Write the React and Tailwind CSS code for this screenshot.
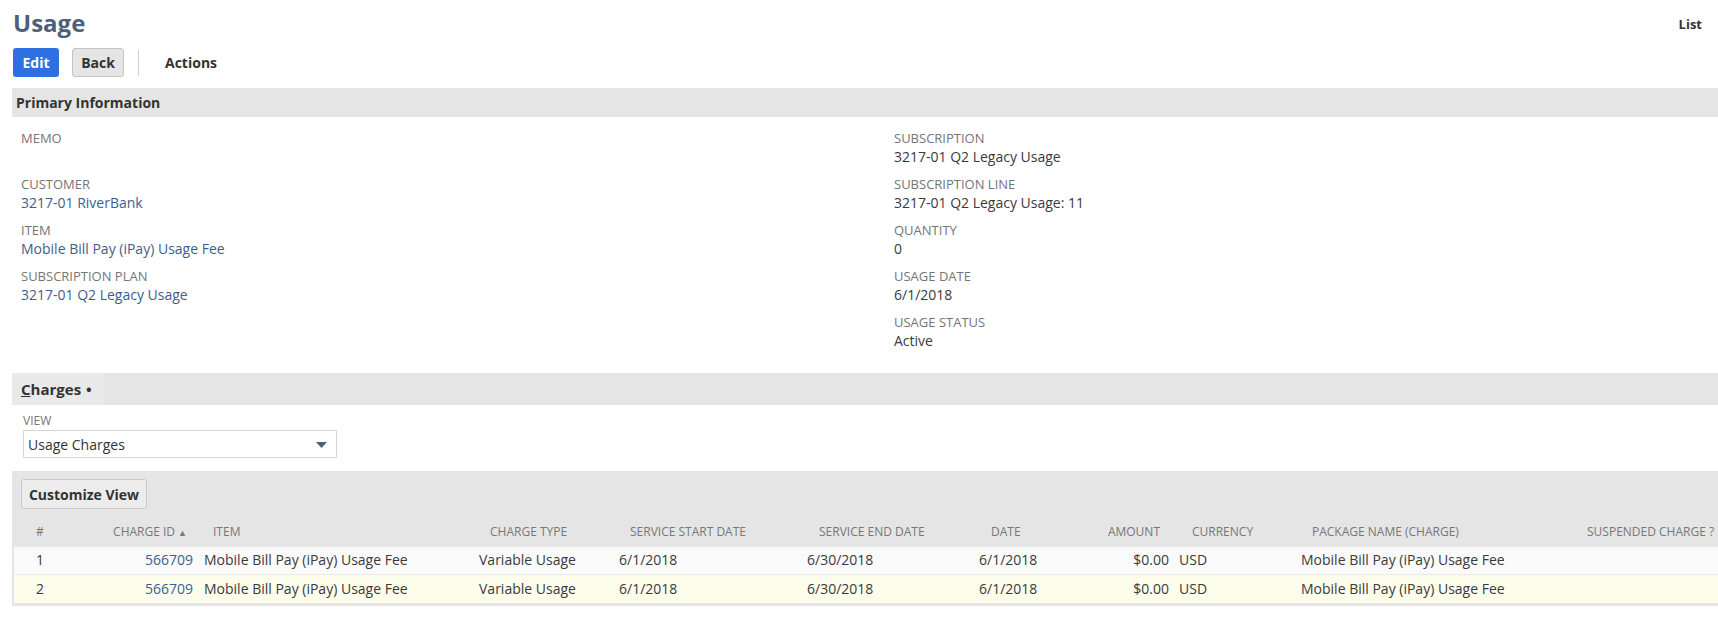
import React from 'react';

const leftFields = [
  { label: 'Memo', value: '' },
  { label: 'Customer', value: '3217-01 RiverBank', link: true },
  { label: 'Item', value: 'Mobile Bill Pay (iPay) Usage Fee', link: true },
  { label: 'Subscription Plan', value: '3217-01 Q2 Legacy Usage', link: true },
];

const rightFields = [
  { label: 'Subscription', value: '3217-01 Q2 Legacy Usage' },
  { label: 'Subscription Line', value: '3217-01 Q2 Legacy Usage: 11' },
  { label: 'Quantity', value: '0' },
  { label: 'Usage Date', value: '6/1/2018' },
  { label: 'Usage Status', value: 'Active' },
];

// widths + paddings line the header text up the way the list view does
const columns = [
  { title: '#', w: 'w-[56px]', th: 'pl-[22px] text-left', td: 'pl-[22px] text-left' },
  { title: 'Charge ID', sort: true, w: 'w-[128px]', th: 'pr-[11px] text-right', td: 'pr-[5px] text-right' },
  { title: 'Item', w: 'w-[276px]', th: 'pl-[15px] text-left', td: 'pl-[6px] text-left' },
  { title: 'Charge Type', w: 'w-[140px]', th: 'pl-[16px] text-left', td: 'pl-[5px] text-left' },
  { title: 'Service Start Date', w: 'w-[188px]', th: 'pl-[16px] text-left', td: 'pl-[5px] text-left' },
  { title: 'Service End Date', w: 'w-[171px]', th: 'pl-[17px] text-left', td: 'pl-[5px] text-left' },
  { title: 'Date', w: 'w-[127px]', th: 'pl-[18px] text-left', td: 'pl-[6px] text-left' },
  { title: 'Amount', w: 'w-[74px]', th: 'pr-[14px] text-right', td: 'pr-[5px] text-right' },
  { title: 'Currency', w: 'w-[122px]', th: 'pl-[18px] text-left', td: 'pl-[5px] text-left' },
  { title: 'Package Name (Charge)', w: 'w-[279px]', th: 'pl-[16px] text-left', td: 'pl-[5px] text-left' },
  { title: 'Suspended Charge ?', w: 'w-[143px]', th: 'pl-[12px] text-left', td: 'pl-[5px] text-left' },
];

const rows = [
  ['1', '566709', 'Mobile Bill Pay (iPay) Usage Fee', 'Variable Usage', '6/1/2018', '6/30/2018', '6/1/2018', '$0.00', 'USD', 'Mobile Bill Pay (iPay) Usage Fee', ''],
  ['2', '566709', 'Mobile Bill Pay (iPay) Usage Fee', 'Variable Usage', '6/1/2018', '6/30/2018', '6/1/2018', '$0.00', 'USD', 'Mobile Bill Pay (iPay) Usage Fee', ''],
];

function Field({ label, value, link }) {
  return (
    <div className="mb-[9px]">
      <div className="text-[13px] leading-[16px] uppercase text-[#757575]">{label}</div>
      <div className={`mt-[1px] h-[20px] text-[14px] leading-[20px] ${link ? 'text-[#3f5d8e]' : 'text-[#3a3a3a]'}`}>
        {value}
      </div>
    </div>
  );
}

export default function App() {
  return (
    <div className="w-[1718px] h-[630px] overflow-hidden bg-white font-['Open_Sans',sans-serif] text-[#333] pl-[12px] pt-[7px]">
      {/* title row */}
      <div className="flex items-start justify-between">
        <h1 className="pl-[1px] text-[24px] leading-[31px] font-bold text-[#4d5f79]">Usage</h1>
        <a className="mt-[8px] mr-[16px] text-[13px] leading-[18px] font-bold text-[#333]">List</a>
      </div>

      {/* buttons */}
      <div className="mt-[10px] flex items-center">
        <button className="ml-[1px] h-[29px] w-[46px] rounded-[3px] bg-[#2e6fe2] text-[14px] font-bold text-white">Edit</button>
        <button className="ml-[13px] h-[29px] w-[52px] rounded-[3px] border border-[#c4c4c4] bg-[#e5e5e5] text-[14px] font-bold text-[#333]">Back</button>
        <div className="ml-[14px] h-[26px] w-px bg-[#cfcfcf]" />
        <span className="ml-[26px] text-[14px] font-bold text-[#333]">Actions</span>
      </div>

      {/* primary information */}
      <div className="mt-[11px] flex h-[29px] items-center bg-[#e5e5e5] pl-[4px] text-[14px] font-bold text-[#333]">
        Primary Information
      </div>
      <div className="grid grid-cols-[873px_1fr] pt-[13px] pl-[9px]">
        <div>
          {leftFields.map(f => <Field key={f.label} {...f} />)}
        </div>
        <div>
          {rightFields.map(f => <Field key={f.label} {...f} />)}
        </div>
      </div>

      {/* charges subtab */}
      <div className="mt-[13px] flex h-[32px] items-end bg-[#e5e5e5]">
        <div className="flex h-[32px] items-center bg-[#e9e9e9] pl-[9px] pr-[12px] text-[15px] font-bold text-[#333]">
          <span><span className="underline">C</span>harges</span>
          <span className="ml-[5px] text-[15px] font-bold leading-none">•</span>
        </div>
      </div>

      <div className="h-[66px] pt-[8px] pl-[11px]">
        <div className="text-[12px] leading-[15px] uppercase text-[#757575]">View</div>
        <div className="relative mt-[2px] flex h-[28px] w-[314px] items-center border border-[#d6d6d6] bg-white pl-[4px] text-[14px] text-[#333]">
          Usage Charges
          <svg className="absolute right-[9px] top-[11px]" width="11" height="6" viewBox="0 0 11 6">
            <path d="M0 0 H11 L5.5 6 Z" fill="#4d5f79" />
          </svg>
        </div>
      </div>

      {/* list machine */}
      <div className="bg-[#e5e5e5] pl-[2px] pb-[3px]">
        <div className="pt-[8px] pb-[10px] pl-[7px]">
          <button className="h-[30px] w-[126px] rounded-[3px] border border-[#c8c8c8] bg-[#ececec] text-[14px] font-bold text-[#333]">
            Customize View
          </button>
        </div>
        <table className="table-fixed border-collapse">
          <colgroup>
            {columns.map(c => <col key={c.title} className={c.w} />)}
          </colgroup>
          <thead>
            <tr className="h-[27px] bg-[#e5e5e5]">
              {columns.map(c => (
                <th key={c.title} className={`whitespace-nowrap p-0 text-[12px] leading-[16px] font-normal uppercase text-[#777] ${c.th}`}>
                  {c.title}
                  {c.sort && <span className="ml-[3px] text-[9px]">▲</span>}
                </th>
              ))}
            </tr>
          </thead>
          <tbody>
            {rows.map((r, i) => (
              <tr key={i} className={`${i === 0 ? 'h-[28px] bg-[#fafafa]' : 'h-[29px] bg-[#fdfdec]'} border-t border-[#e9e9e9]`}>
                {r.map((cell, j) => (
                  <td
                    key={j}
                    className={`whitespace-nowrap text-[14px] leading-[20px] ${j === 1 ? 'text-[#3f5d8e]' : 'text-[#3a3a3a]'} ${columns[j].td}`}
                  >
                    {cell}
                  </td>
                ))}
              </tr>
            ))}
          </tbody>
        </table>
      </div>
    </div>
  );
}
